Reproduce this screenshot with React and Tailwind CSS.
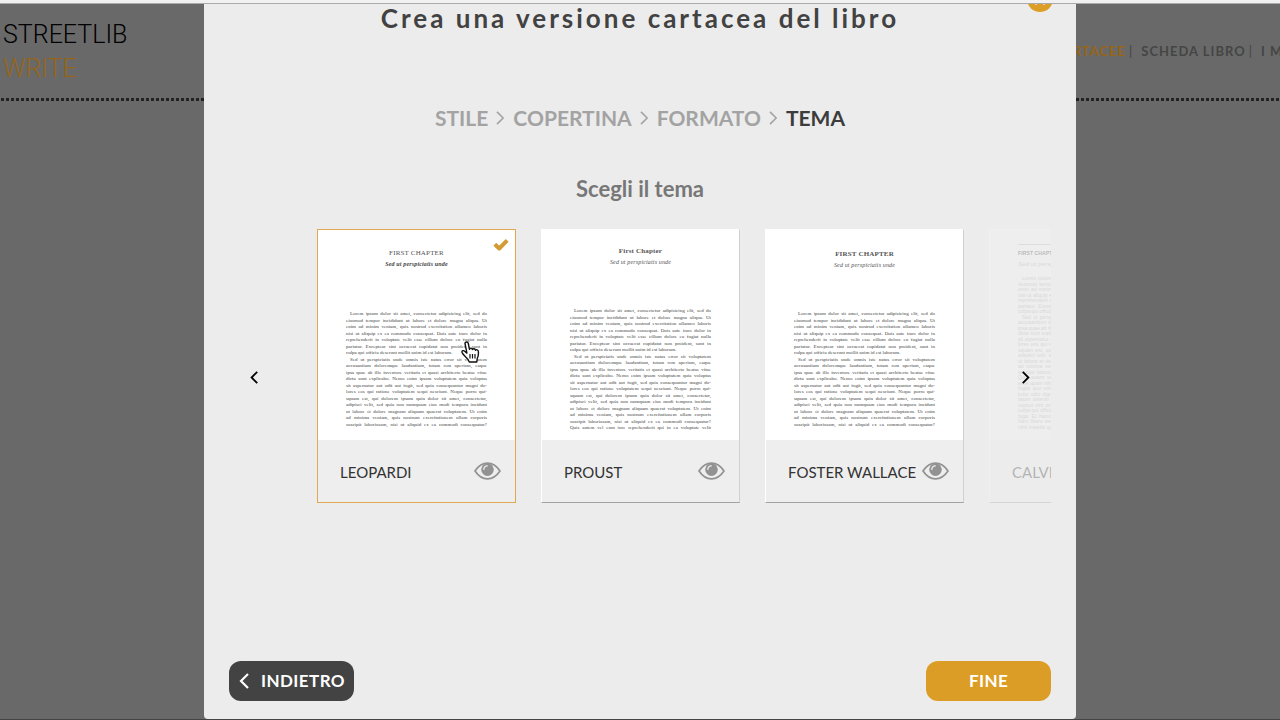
import React from "react";

const SANS = "font-['Lato','Open_Sans',sans-serif]";

const LINES = [
  ["Lorem ipsum dolor sit amet, consectetur adipisicing elit, sed do", "first"],
  ["eiusmod tempor incididunt ut labore et dolore magna aliqua. Ut"],
  ["enim ad minim veniam, quis nostrud exercitation ullamco laboris"],
  ["nisi ut aliquip ex ea commodo consequat. Duis aute irure dolor in"],
  ["reprehenderit in voluptate velit esse cillum dolore eu fugiat nulla"],
  ["pariatur. Excepteur sint occaecat cupidatat non proident, sunt in"],
  ["culpa qui officia deserunt mollit anim id est laborum.", "last"],
  ["Sed ut perspiciatis unde omnis iste natus error sit voluptatem", "first"],
  ["accusantium doloremque laudantium, totam rem aperiam, eaque"],
  ["ipsa quae ab illo inventore veritatis et quasi architecto beatae vitae"],
  ["dicta sunt explicabo. Nemo enim ipsam voluptatem quia voluptas"],
  ["sit aspernatur aut odit aut fugit, sed quia consequuntur magni do-"],
  ["lores eos qui ratione voluptatem sequi nesciunt. Neque porro qui-"],
  ["squam est, qui dolorem ipsum quia dolor sit amet, consectetur,"],
  ["adipisci velit, sed quia non numquam eius modi tempora incidunt"],
  ["ut labore et dolore magnam aliquam quaerat voluptatem. Ut enim"],
  ["ad minima veniam, quis nostrum exercitationem ullam corporis"],
  ["suscipit laboriosam, nisi ut aliquid ex ea commodi consequatur?"],
  ["Quis autem vel eum iure reprehenderit qui in ea voluptate velit"],
  ["esse quam nihil molestiae consequatur, vel illum qui dolorem eum"],
  ["fugiat quo voluptas nulla pariatur. At vero eos et accusamus et"],
  ["iusto odio dignissimos ducimus qui blanditiis praesentium volup-"],
  ["tatum deleniti atque corrupti quos dolores et quas molestias ex-"],
  ["cepturi sint occaecati cupiditate non provident, similique sunt in"],
  ["culpa qui officia deserunt mollitia animi, id est laborum et dolorum"],
  ["fuga. Et harum quidem rerum facilis est et expedita distinctio."],
  ["Nam libero tempore, cum soluta nobis est eligendi optio cumque"],
  ["nihil impedit quo minus id quod maxime placeat facere possimus"],
];

const LINE_STYLE = {
  first: "pl-1 [text-align-last:justify]",
  last: "[text-align-last:left]",
  full: "[text-align-last:justify]",
};

function PageText({ count, className }) {
  return (
    <div className={`grid auto-rows-fr whitespace-nowrap text-[5px] leading-none ${className}`}>
      {LINES.slice(0, count).map(([text, kind]) => (
        <p key={text} className={`min-h-0 ${LINE_STYLE[kind || "full"]}`}>{text}</p>
      ))}
    </div>
  );
}

function Chevron({ className, flip, width }) {
  return (
    <svg viewBox="0 0 10 16" className={`shrink-0 ${className}`} fill="none" stroke="currentColor" strokeWidth={width} aria-hidden="true">
      <path d={flip ? "M9 1 2 8l7 7" : "M1 1l7 7-7 7"} />
    </svg>
  );
}

function Eye() {
  return (
    <svg viewBox="0 0 27 18" className="h-[18px] w-[27px]" aria-hidden="true">
      <path d="M1 9C4.500 3.800 8.700 1.200 13.500 1.200S22.500 3.800 26 9c-3.500 5.200-7.700 7.800-12.500 7.800S4.500 14.200 1 9Z" fill="none" stroke="#929292" strokeWidth="1.700" />
      <circle cx="13.500" cy="7.600" r="6.300" fill="#929292" />
      <path d="M9.800 7.400c.1-2.100 1.400-3.500 3.500-3.600" fill="none" stroke="#eee" strokeWidth="1.300" strokeLinecap="round" />
    </svg>
  );
}

function Check() {
  return (
    <svg viewBox="0 0 16 13" className="absolute right-[6px] top-[8px] h-[13px] w-4" aria-hidden="true">
      <path d="M1.800 6.300 6.200 10.500 14.200 2.300" fill="none" stroke="#d49b35" strokeWidth="4" strokeLinejoin="round" />
    </svg>
  );
}

function Hand() {
  return (
    <svg viewBox="0 0 19 22" className="absolute left-[143px] top-[111px] h-[22px] w-[19px]" aria-hidden="true">
      <path d="M4 2.500C4 .5 7 .5 7.300 2.500l1.200 5.800c.3-1.700 2.500-1.600 2.900.3.500-1.300 2.600-1 3 .6.900-1.100 2.900-.4 3 1.300.2 3.300.1 5.200-1.200 7.200L15.800 21H8.300c-.8-2.400-2.500-4.200-4.300-5.800-1.200-1.200-2.600-2.700-3-4-.3-1.400 1.400-2.200 2.700-1l2.200 1.900L4 2.500Z" fill="#fff" stroke="#111" strokeWidth="1.400" strokeLinejoin="round" />
      <path d="M9 13v4.500M11.500 13v4.500M14 13v4.500" stroke="#111" strokeWidth="1.200" />
    </svg>
  );
}

const SERIF = "font-['Liberation_Serif',serif] text-[#444]";
const THIN = "font-['Liberation_Sans',sans-serif] text-[#aaa]";

const THEMES = [
  { name: "LEOPARDI", title: "FIRST CHAPTER", page: SERIF, head: "pt-[18px]", titleStyle: "text-center text-[7px] text-[#555]", sub: "text-center font-bold", text: "mt-[42px] h-[117px]", count: 18, selected: true },
  { name: "PROUST", title: "First Chapter", page: SERIF, head: "pt-4", titleStyle: "text-center text-[7px] font-bold text-[#555]", sub: "text-center text-[#555]", text: "mt-[41px] h-[124px]", count: 19 },
  { name: "FOSTER WALLACE", title: "FIRST CHAPTER", page: SERIF, head: "pt-[19px]", titleStyle: "text-center text-[7px] font-bold text-[#555]", sub: "text-center text-[#555]", text: "mt-[41px] h-[117px]", count: 18 },
  { name: "CALVINO", title: "FIRST CHAPTER", page: THIN, head: "pt-[14px]", titleStyle: "border-t border-[#bbb] pt-[3px] text-[5px] font-bold text-[#444]", sub: "", text: "mt-[7px] h-[154px]", count: 28, faded: true },
];

function ThemeCard({ theme }) {
  return (
    <li className={`relative h-[274px] w-[199px] shrink-0 border bg-[#eee] ${theme.selected ? "border-[#e0a850]" : "border-t-white border-l-white border-r-[#d0d0d0] border-b-[#a2a2a2]"} ${theme.faded ? "opacity-30" : ""}`}>
      <div className={`h-[210px] px-7 ${theme.faded ? "bg-[#f4f4f4]" : "bg-white"} ${theme.page} ${theme.head}`}>
        <h3 className={`leading-[10px] tracking-wide ${theme.titleStyle}`}>{theme.title}</h3>
        <p className={`mt-px text-[6px] italic leading-[10px] tracking-wide ${theme.sub}`}>Sed ut perspiciatis unde</p>
        <PageText count={theme.count} className={theme.text} />
      </div>
      <div className="flex h-[62px] items-center justify-between pl-[22px] pr-[14px]">
        <span className="whitespace-nowrap pt-[2px] text-[15px] leading-6 text-[#333]">{theme.name}</span>
        {theme.faded ? null : (
          <button type="button" aria-label={`Anteprima ${theme.name}`}><Eye /></button>
        )}
      </div>
      {theme.selected ? <Check /> : null}
      {theme.selected ? <Hand /> : null}
    </li>
  );
}

const STEPS = ["STILE", "COPERTINA", "FORMATO", "TEMA"];

export default function App() {
  return (
    <div className={`relative flex min-h-screen flex-col overflow-hidden bg-[#696969] ${SANS}`}>
      <div className="h-1 border-b border-[#aaa] bg-[#f1f1f1]" />
      <header>
        <div className="flex h-[94px] pt-[14px]">
          <a href="#home" className="pl-[3px] font-['Roboto',sans-serif] text-[25px] font-light leading-[34px] text-black">
            <span className="block">STREETLIB</span>
            <span className="block text-[#966518]">WRITE</span>
          </a>
          <nav className="ml-auto flex w-[234px] gap-2 overflow-hidden whitespace-nowrap pt-[23px] text-[13px] font-bold leading-5 tracking-[1px] text-[#454545]">
            <span className="flex shrink-0 gap-[3px]"><a href="#cartacee" className="w-20 text-right text-[#966518]">CARTACEE</a><span className="font-normal">|</span></span>
            <span className="flex shrink-0 gap-[3px]"><a href="#scheda">SCHEDA LIBRO</a><span className="font-normal">|</span></span>
            <a href="#libri">I MIEI</a>
          </nav>
        </div>
        <div className="h-[3px] bg-[repeating-linear-gradient(90deg,#696969_0_1px,#222_1px_4px,#696969_4px_5px)]" />
      </header>

      <div className="absolute inset-x-0 bottom-0 top-1 flex justify-center overflow-hidden border-b border-[#444]">
        <section role="dialog" aria-labelledby="dialog-title" className="relative flex w-[872px] flex-col rounded-b bg-[#ececec] px-[25px] pb-[18px]">
          <button type="button" aria-label="Chiudi" className="absolute -top-[18px] right-[23px] flex size-[26px] items-center justify-center rounded-full bg-[#dd9e27]">
            <svg viewBox="0 0 12 12" className="size-3" stroke="#fff" strokeWidth="3" aria-hidden="true"><path d="M1 1l10 10M11 1 1 11" /></svg>
          </button>
          <h1 id="dialog-title" className="text-center text-[26px] font-bold leading-7 tracking-[3px] text-[#424242]">Crea una versione cartacea del libro</h1>
          <ol className="mt-[72px] flex items-center justify-center gap-2 text-[21px] font-bold leading-7">
            {STEPS.map((step, i) => (
              <li key={step} className={`flex items-center gap-2 ${i === 3 ? "text-[#3c3c3c]" : "text-[#a3a3a3]"}`}>
                {step}
                {i < 3 ? <Chevron className="h-[14px] w-[9px]" width="1.800" /> : null}
              </li>
            ))}
          </ol>
          <h2 className="mt-[43px] text-center text-[22px] font-bold leading-7 text-[#777]">Scegli il tema</h2>
          <div className="relative mt-[26px]">
            <ul className="ml-[88px] flex gap-[25px] overflow-hidden">
              {THEMES.map((theme) => <ThemeCard key={theme.name} theme={theme} />)}
            </ul>
            <button type="button" aria-label="Precedente" className="absolute left-[20px] top-[142px]"><Chevron flip className="h-[13px] w-[10px]" width="2.200" /></button>
            <button type="button" aria-label="Successivo" className="absolute right-[20px] top-[142px]"><Chevron className="h-[13px] w-[10px]" width="2.200" /></button>
          </div>
          <div className="mt-auto flex justify-between text-[17px] font-bold tracking-wide text-white">
            <button type="button" className="flex h-10 w-[125px] items-center gap-3 rounded-xl bg-[#434343] pl-[10px]"><Chevron flip className="h-4 w-[10px]" width="2.200" />INDIETRO</button>
            <button type="button" className="h-10 w-[125px] rounded-xl bg-[#dc9d26]">FINE</button>
          </div>
        </section>
      </div>
    </div>
  );
}
